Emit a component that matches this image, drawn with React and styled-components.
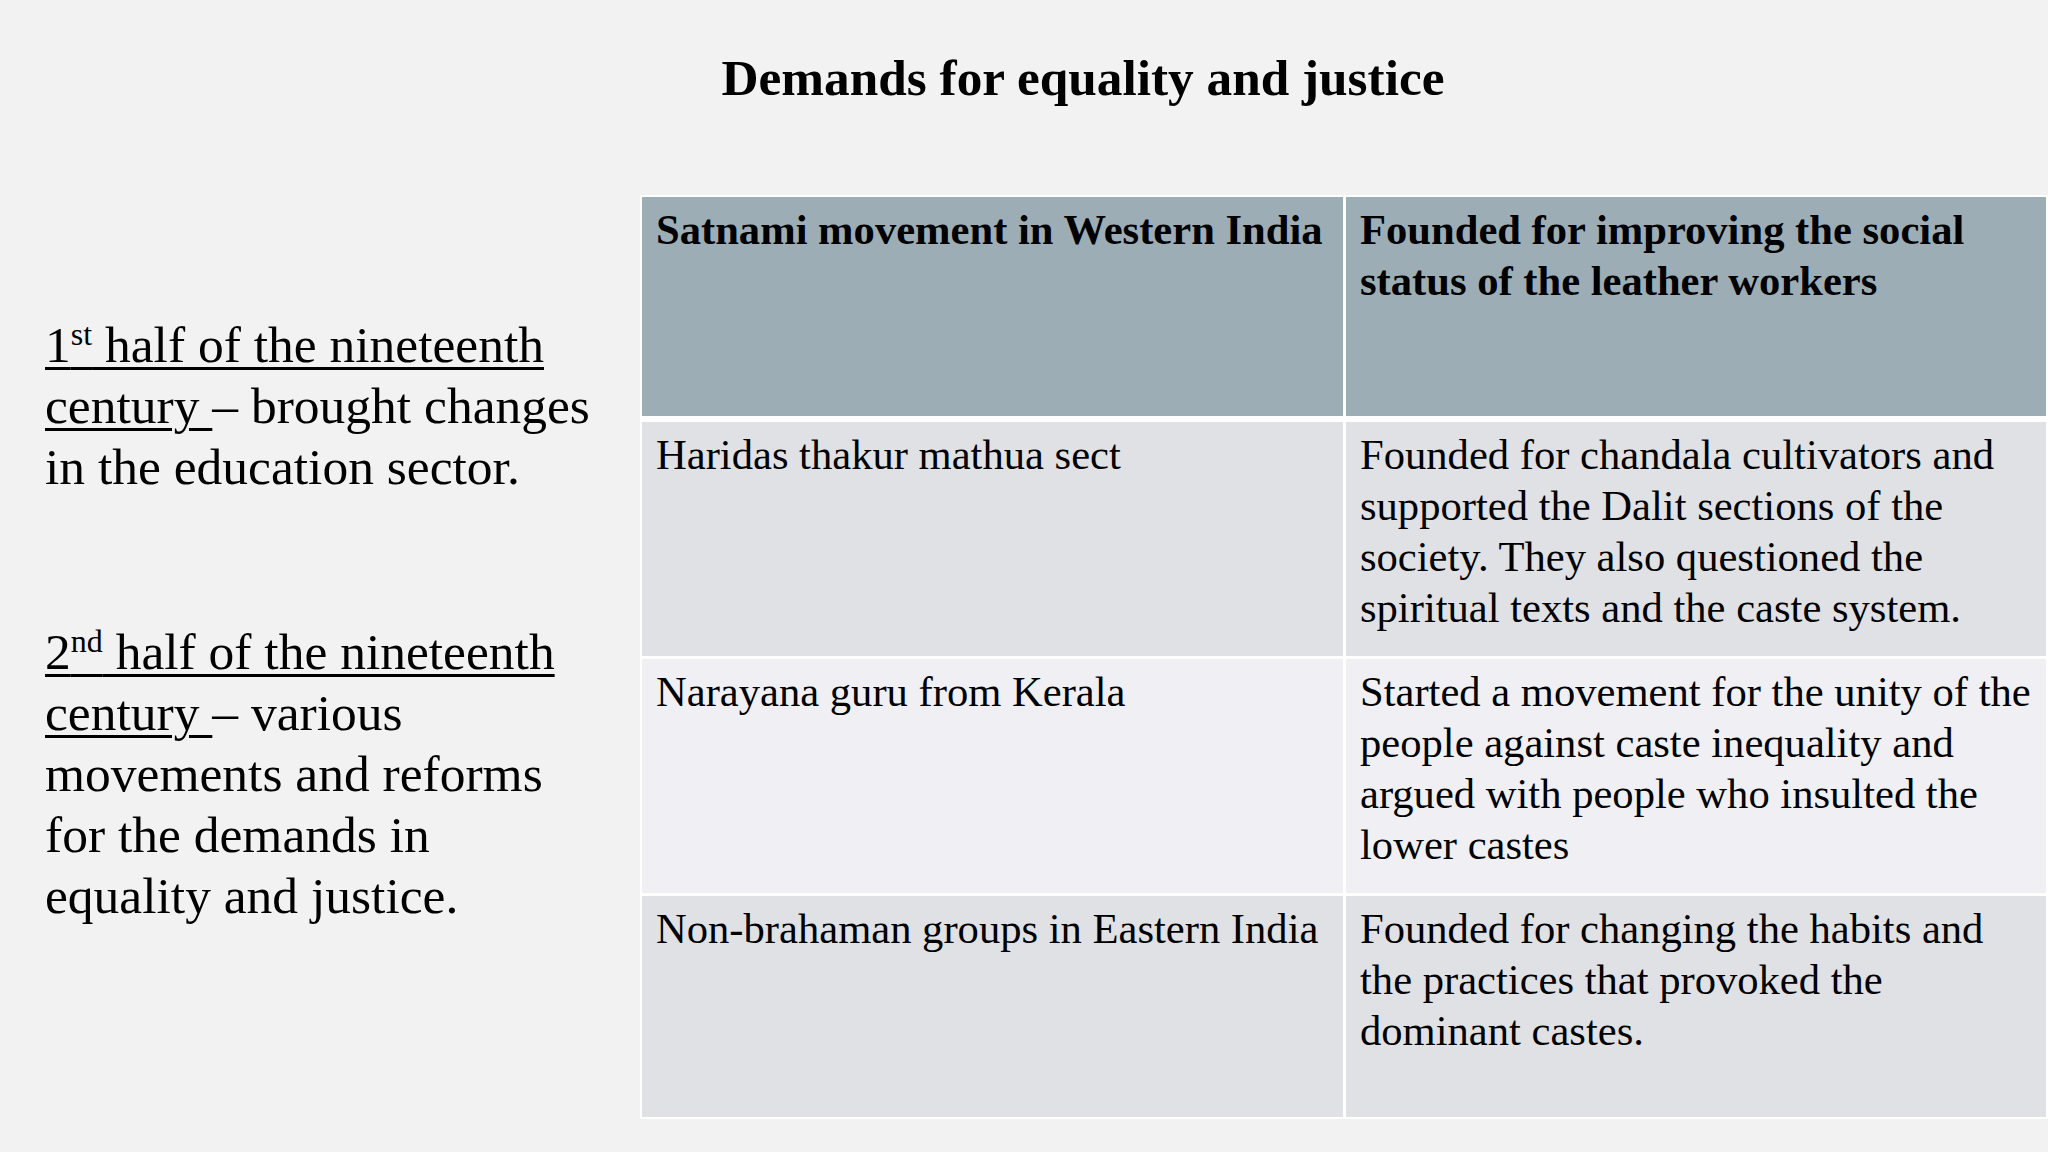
import React from "react";
import styled, { createGlobalStyle } from "styled-components";

const Global = createGlobalStyle`
  html, body { margin: 0; padding: 0; background: #f2f2f2; }
  body { font-family: "Liberation Serif", "Times New Roman", serif; color: #000; }
`;

const Slide = styled.div`
  width: 2048px;
  height: 1152px;
  background: #f2f2f2;
  display: flex;
  flex-direction: column;
  overflow: hidden;
`;

const TitleBar = styled.header`
  padding: 49px 0 0 118px;
  display: flex;
  justify-content: center;
`;

const Title = styled.h1`
  margin: 0;
  font-size: 51.3px;
  line-height: 57px;
  font-weight: 700;
`;

const Main = styled.main`
  margin-top: 89px;
  display: flex;
  align-items: flex-start;
`;

const Notes = styled.section`
  width: 640px;
  padding: 119px 0 0 45px;
  box-sizing: border-box;
  flex: none;
`;

const Para = styled.p`
  margin: 0 0 ${(p) => p.$after || 0}px;
  font-size: 51.5px;
  line-height: 61px;
  white-space: nowrap;
`;

const Under = styled.span`
  text-decoration: underline;
  text-decoration-thickness: 2.5px;
  text-underline-offset: 5px;
`;

const Sup = styled.span`
  font-size: 32px;
  line-height: 0;
  vertical-align: 17px;
`;

const Table = styled.div`
  flex: none;
  width: 1408px;
  box-sizing: border-box;
  display: grid;
  grid-template-columns: 701px 700px;
  column-gap: 3px;
  row-gap: 3px;
  padding: 2px;
  background: #ffffff;
`;

const Cell = styled.div`
  height: ${(p) => p.$h}px;
  box-sizing: border-box;
  padding: 7px 10px 0 14px;
  background: ${(p) => p.$bg};
  font-size: 42.6px;
  line-height: 51px;
  font-weight: ${(p) => (p.$head ? 700 : 400)};
  white-space: nowrap;
  margin-bottom: ${(p) => (p.$head ? 3 : 0)}px;
`;

const rows = [
  {
    head: true,
    h: 219,
    bg: "#9dadb5",
    a: ["Satnami movement in Western India"],
    b: ["Founded for improving the social", "status of the leather workers"],
  },
  {
    h: 234,
    bg: "#e0e1e4",
    a: ["Haridas thakur mathua sect"],
    b: [
      "Founded for chandala cultivators and",
      "supported the Dalit sections of the",
      "society. They also questioned the",
      "spiritual texts and the caste system.",
    ],
  },
  {
    h: 234,
    bg: "#f0f0f4",
    a: ["Narayana guru from Kerala"],
    b: [
      "Started a movement for the unity of the",
      "people against caste inequality and",
      "argued with people who insulted the",
      "lower castes",
    ],
  },
  {
    h: 221,
    bg: "#e0e1e4",
    a: ["Non-brahaman groups in Eastern India"],
    b: [
      "Founded for changing the habits and",
      "the practices that provoked the",
      "dominant castes.",
    ],
  },
];

const Lines = ({ lines }) =>
  lines.map((l, i) => (
    <React.Fragment key={i}>
      {i > 0 && <br />}
      {l}
    </React.Fragment>
  ));

export default function App() {
  return (
    <>
      <Global />
      <Slide>
        <TitleBar>
          <Title>Demands for equality and justice</Title>
        </TitleBar>
        <Main>
          <Notes>
            <Para $after={123.5}>
              <Under>
                1<Sup>st</Sup> half of the nineteenth
              </Under>
              <br />
              <Under>century </Under>– brought changes
              <br />
              in the education sector.
            </Para>
            <Para>
              <Under>
                2<Sup>nd</Sup> half of the nineteenth
              </Under>
              <br />
              <Under>century </Under>– various
              <br />
              movements and reforms
              <br />
              for the demands in
              <br />
              equality and justice.
            </Para>
          </Notes>
          <Table>
            {rows.map((r, i) => (
              <React.Fragment key={i}>
                <Cell $h={r.h} $bg={r.bg} $head={r.head}>
                  <Lines lines={r.a} />
                </Cell>
                <Cell $h={r.h} $bg={r.bg} $head={r.head}>
                  <Lines lines={r.b} />
                </Cell>
              </React.Fragment>
            ))}
          </Table>
        </Main>
      </Slide>
    </>
  );
}
